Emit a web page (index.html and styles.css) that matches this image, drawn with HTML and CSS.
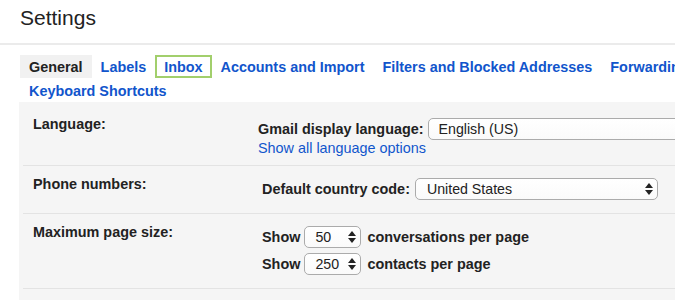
FILE: index.html
```html
<!DOCTYPE html>
<html lang="en">
<head>
  <meta charset="UTF-8">
  <title>Settings</title>
  <link rel="stylesheet" href="styles.css">
</head>
<body>
  <div class="page">
    <header class="header">
      <h1 class="title">Settings</h1>
    </header>

    <nav class="tabs">
      <span class="tab tab-active">General</span>
      <a href="#" class="tab">Labels</a>
      <a href="#" class="tab tab-focus">Inbox</a>
      <a href="#" class="tab">Accounts and Import</a>
      <a href="#" class="tab">Filters and Blocked Addresses</a>
      <a href="#" class="tab">Forwarding and POP/IMAP</a>
      <a href="#" class="tab">Add-ons</a>
      <a href="#" class="tab">Chat</a>
      <a href="#" class="tab">Advanced</a>
      <a href="#" class="tab">Offline</a>
      <a href="#" class="tab">Themes</a>
      <a href="#" class="tab">Keyboard Shortcuts</a>
    </nav>

    <div class="panel">
      <div class="row row-first">
        <div class="label">Language:</div>
        <div class="value">
          <div class="field">
            <span>Gmail display language:</span>
            <span class="select select-wide">English (US)</span>
          </div>
          <a href="#" class="link">Show all language options</a>
        </div>
      </div>

      <div class="row">
        <div class="label">Phone numbers:</div>
        <div class="value">
          <div class="field">
            <span>Default country code:</span>
            <span class="select select-country">United States
              <svg class="arrows" width="8" height="12" viewBox="0 0 8 12"><polygon points="0,5 4,0 8,5" /><polygon points="0,7 4,12 8,7" /></svg>
            </span>
          </div>
        </div>
      </div>

      <div class="row">
        <div class="label">Maximum page size:</div>
        <div class="value">
          <div class="field">
            <span>Show</span>
            <span class="select select-small">50
              <svg class="arrows" width="8" height="12" viewBox="0 0 8 12"><polygon points="0,5 4,0 8,5" /><polygon points="0,7 4,12 8,7" /></svg>
            </span>
            <span class="after">conversations per page</span>
          </div>
          <div class="field field-next">
            <span>Show</span>
            <span class="select select-small">250
              <svg class="arrows" width="8" height="12" viewBox="0 0 8 12"><polygon points="0,5 4,0 8,5" /><polygon points="0,7 4,12 8,7" /></svg>
            </span>
            <span class="after">contacts per page</span>
          </div>
        </div>
      </div>

      <div class="row row-empty"></div>
    </div>
  </div>
</body>
</html>
```

FILE: styles.css
```css
html, body {
  margin: 0;
  overflow: hidden;
}

body {
  font-family: "Liberation Sans", Arial, sans-serif;
  font-size: 14.4px;
  color: #222;
  background: #fff;
}

.page {
  width: 1260px;
}

.header {
  height: 45px;
  box-sizing: border-box;
  padding: 5px 0 0 20px;
  border-bottom: 2px solid #ebebeb;
}

.title {
  margin: 0;
  font-size: 21px;
  font-weight: normal;
  line-height: 26px;
  color: #222;
}

/* tab strip, wraps like the real one */
.tabs {
  display: flex;
  flex-wrap: wrap;
  row-gap: 1px;
  width: 1200px;
  margin: 10px 0 0 20px;
}

.tab {
  padding: 4px 9px 2px;
  line-height: 17px;
  font-weight: bold;
  color: #15c;
  text-decoration: none;
}

.tab-active {
  background: #f1f1f1;
  color: #222;
}

.tab-focus {
  outline: 2px solid #a2cf6c;
  outline-offset: -2px;
}

.panel {
  margin-left: 19px;
  width: 1200px;
  background: #f5f5f5;
}

.row {
  display: grid;
  grid-template-columns: 235px 1fr;
  margin-left: 4px;
  padding: 10px 0 13px;
  border-bottom: 1px solid #e3e3e3;
}

.row-first {
  padding: 14px 0 8px;
}

.row-empty {
  height: 40px;
  border-bottom: none;
}

.label {
  padding-left: 10px;
  line-height: 17px;
  font-weight: bold;
}

.value {
  padding: 2px 0 0 4px;
  line-height: 17px;
}

.row-first .value {
  padding-left: 0;
}

.field {
  display: flex;
  align-items: center;
  gap: 4px;
  font-weight: bold;
}

.field-next {
  margin-top: 5px;
}

.after {
  margin-left: 2px;
}

.select {
  position: relative;
  display: flex;
  align-items: center;
  height: 22px;
  box-sizing: border-box;
  padding-left: 10px;
  border: 1px solid #ababab;
  border-radius: 5px;
  background: linear-gradient(#fff, #fafafa);
  font-size: 14.2px;
  font-weight: normal;
  color: #222;
}

.select-wide {
  width: 320px;
}

.select-country {
  width: 243px;
  margin-left: 1px;
  padding-left: 11px;
}

.select-small {
  width: 57px;
  padding-left: 10px;
}

.arrows {
  position: absolute;
  right: 4px;
  top: 4px;
  fill: #222;
}

.link {
  color: #15c;
  text-decoration: none;
}
```
